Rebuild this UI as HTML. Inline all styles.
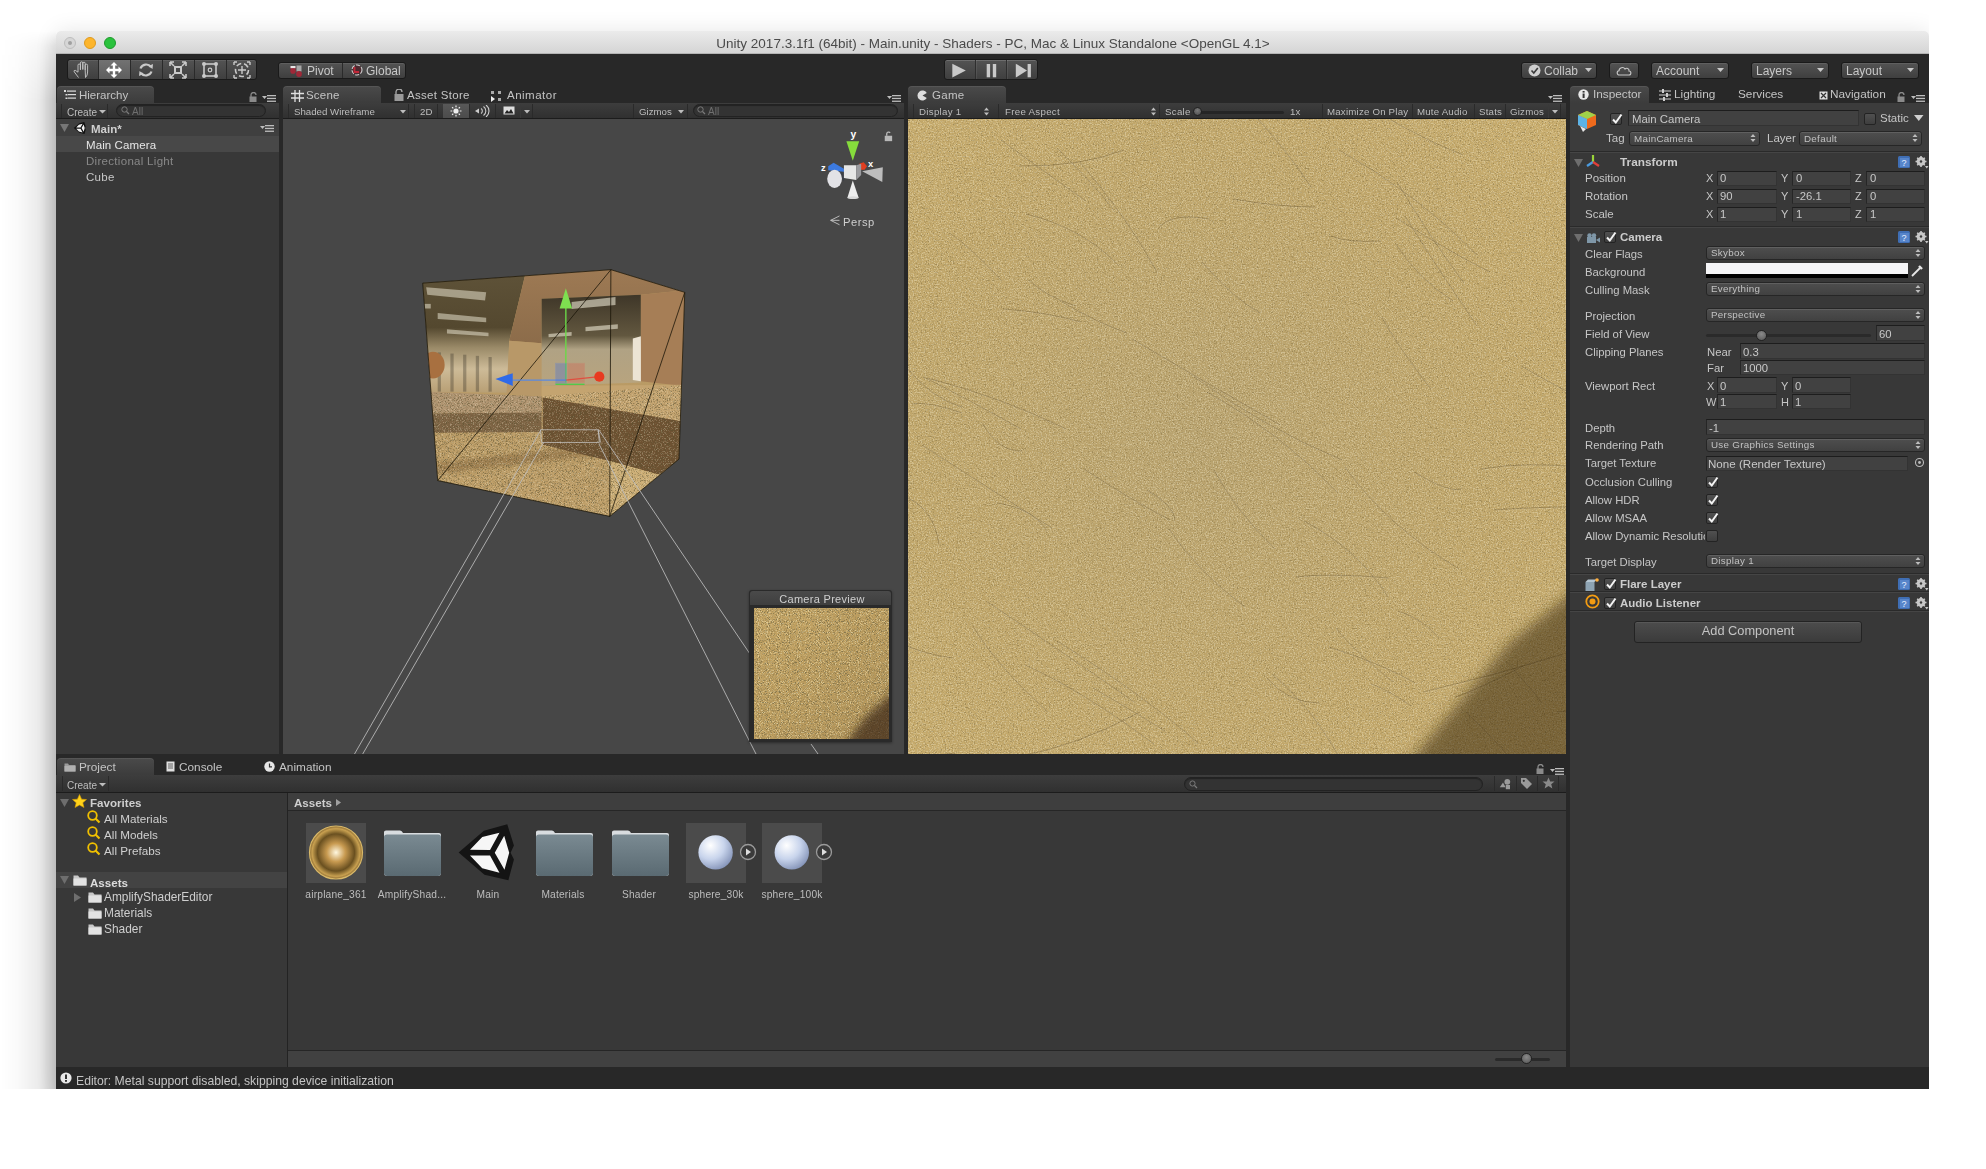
<!DOCTYPE html><html><head><meta charset="utf-8"><style>
html,body{margin:0;padding:0;}
body{width:1986px;height:1169px;position:relative;overflow:hidden;background:#fff;font-family:"Liberation Sans",sans-serif;}
.a{position:absolute;}
.t{position:absolute;white-space:nowrap;line-height:1;font-family:"Liberation Sans",sans-serif;will-change:transform;}
</style></head><body>
<div class="a" style="left:56px;top:31px;width:1873px;height:1058px;border-radius:5px 5px 0 0;box-shadow:0 0 22px rgba(0,0,0,0.10);"></div>
<div class="a" style="left:1929px;top:0px;width:57px;height:1169px;background:#fff;"></div>
<div class="a" style="left:0px;top:1089px;width:1986px;height:80px;background:#fff;"></div>
<div class="a" style="left:0px;top:31px;width:56px;height:1058px;background:linear-gradient(to right,rgba(0,0,0,0) 0%,rgba(0,0,0,0.02) 30%,rgba(0,0,0,0.08) 70%,rgba(0,0,0,0.22) 100%);-webkit-mask-image:linear-gradient(to bottom,transparent 0px,rgba(0,0,0,.4) 15px,#000 70px);"></div>
<div class="a" style="left:56px;top:54px;width:1873px;height:1035px;background:#282828;"></div>
<div class="a" style="left:56px;top:31px;width:1873px;height:23px;background:linear-gradient(#ebebeb,#d4d4d4);border-radius:5px 5px 0 0;"></div>
<div class="a" style="left:56px;top:53px;width:1873px;height:1px;background:#b4b4b4;"></div>
<div class="a" style="left:64px;top:37px;width:10px;height:10px;border-radius:50%;background:#d6d6d6;border:1px solid #bdbdbd;"></div>
<div class="a" style="left:68px;top:41px;width:4px;height:4px;border-radius:50%;background:#a0a0a0;"></div>
<div class="a" style="left:84px;top:37px;width:10px;height:10px;border-radius:50%;background:#fdb52c;border:1px solid #de9a1f;"></div>
<div class="a" style="left:104px;top:37px;width:10px;height:10px;border-radius:50%;background:#2ac23d;border:1px solid #1f9a2c;"></div>
<div class="t" style="left:693px;width:600px;text-align:center;top:37.07px;font-size:13.5px;color:#4a4a4a;">Unity 2017.3.1f1 (64bit) - Main.unity - Shaders - PC, Mac &amp; Linux Standalone &lt;OpenGL 4.1&gt;</div>
<div class="a" style="left:67px;top:59px;width:190px;height:21px;background:linear-gradient(#535353,#3f3f3f);border:1px solid #1a1a1a;border-radius:3px;box-sizing:border-box;box-shadow:inset 0 1px 0 rgba(255,255,255,0.08);"></div>
<div class="a" style="left:98px;top:60px;width:32px;height:19px;background:linear-gradient(#727272,#5e5e5e);"></div>
<div class="a" style="left:98px;top:60px;width:1px;height:19px;background:#2a2a2a;"></div>
<div class="a" style="left:130px;top:60px;width:1px;height:19px;background:#2a2a2a;"></div>
<div class="a" style="left:162px;top:60px;width:1px;height:19px;background:#2a2a2a;"></div>
<div class="a" style="left:194px;top:60px;width:1px;height:19px;background:#2a2a2a;"></div>
<div class="a" style="left:226px;top:60px;width:1px;height:19px;background:#2a2a2a;"></div>
<svg class="a" style="left:73px;top:61px;" width="19" height="18" viewBox="0 0 19 18"><path d="M5.5 16.5 L1.2 10.8 Q0.6 9.3 2.2 9.3 L5 11.2 L5 4.2 Q5 3 6.2 3 Q7.4 3 7.4 4.2 L7.4 9 M7.4 8.5 L7.4 2 Q7.4 0.8 8.6 0.8 Q9.8 0.8 9.8 2 L9.8 8.5 M9.8 8.5 L9.8 2.4 Q9.8 1.2 11 1.2 Q12.2 1.2 12.2 2.4 L12.2 9 M12.2 9 L12.2 4.4 Q12.2 3.2 13.4 3.2 Q14.6 3.2 14.6 4.4 L14.6 11 Q14.6 14.5 12.5 16.5 Z" fill="none" stroke="#c9c9c9" stroke-width="0.9" stroke-linejoin="round"/></svg>
<svg class="a" style="left:105px;top:61px;" width="18" height="18" viewBox="0 0 18 18"><path d="M9 1 L12.5 4.5 L10.2 4.5 L10.2 7.8 L13.5 7.8 L13.5 5.5 L17 9 L13.5 12.5 L13.5 10.2 L10.2 10.2 L10.2 13.5 L12.5 13.5 L9 17 L5.5 13.5 L7.8 13.5 L7.8 10.2 L4.5 10.2 L4.5 12.5 L1 9 L4.5 5.5 L4.5 7.8 L7.8 7.8 L7.8 4.5 L5.5 4.5 Z" fill="#fff"/></svg>
<svg class="a" style="left:137px;top:61px;" width="18" height="18" viewBox="0 0 18 18"><path d="M3.5 7.5 A6 6 0 0 1 14 6" fill="none" stroke="#c9c9c9" stroke-width="2.2"/><path d="M14.5 10.5 A6 6 0 0 1 4 12" fill="none" stroke="#c9c9c9" stroke-width="2.2"/><path d="M11.5 5 L16 3 L15.5 8 Z" fill="#c9c9c9"/><path d="M6.5 13 L2 15 L2.5 10 Z" fill="#c9c9c9"/></svg>
<svg class="a" style="left:169px;top:61px;" width="18" height="18" viewBox="0 0 18 18"><rect x="6" y="6" width="6" height="6" fill="none" stroke="#c9c9c9" stroke-width="2"/><path d="M1 1 L5 1 M1 1 L1 5 M1 1 L5 5 M17 1 L13 1 M17 1 L17 5 M17 1 L13 5 M1 17 L5 17 M1 17 L1 13 M1 17 L5 13 M17 17 L13 17 M17 17 L17 13 M17 17 L13 13" stroke="#c9c9c9" stroke-width="1.6" fill="none"/></svg>
<svg class="a" style="left:201px;top:61px;" width="18" height="18" viewBox="0 0 18 18"><rect x="3" y="3" width="12" height="12" fill="none" stroke="#c9c9c9" stroke-width="1.6"/><circle cx="3" cy="3" r="2" fill="#c9c9c9"/><circle cx="15" cy="3" r="2" fill="#c9c9c9"/><circle cx="3" cy="15" r="2" fill="#c9c9c9"/><circle cx="15" cy="15" r="2" fill="#c9c9c9"/><circle cx="9" cy="9" r="1.8" fill="none" stroke="#c9c9c9" stroke-width="1.2"/></svg>
<svg class="a" style="left:233px;top:61px;" width="18" height="18" viewBox="0 0 18 18"><circle cx="9" cy="9" r="6.5" fill="none" stroke="#c9c9c9" stroke-width="1.6" stroke-dasharray="5 3"/><path d="M9 5 L9 13 M5 9 L13 9" stroke="#c9c9c9" stroke-width="1.4"/><path d="M1 1 L4 1 M1 1 L1 4 M17 1 L14 1 M17 1 L17 4 M1 17 L4 17 M1 17 L1 14 M17 17 L14 17 M17 17 L17 14" stroke="#c9c9c9" stroke-width="1.4"/></svg>
<div class="a" style="left:278px;top:62px;width:128px;height:17px;background:linear-gradient(#535353,#3f3f3f);border:1px solid #1a1a1a;border-radius:3px;box-sizing:border-box;box-shadow:inset 0 1px 0 rgba(255,255,255,0.08);"></div>
<div class="a" style="left:342px;top:63px;width:1px;height:15px;background:#2a2a2a;"></div>
<svg class="a" style="left:290px;top:65px;" width="14" height="13" viewBox="0 0 14 13"><rect x="0.5" y="1.5" width="5" height="5" fill="#8a2030"/><rect x="0.5" y="1" width="5" height="2.2" fill="#e6e6e6"/><rect x="6.5" y="0.5" width="5" height="6" fill="#a8a8a8"/><circle cx="3" cy="6.2" r="2.6" fill="#a02838"/><circle cx="9" cy="9" r="2.9" fill="#a02838"/></svg>
<div class="t" style="left:307px;top:64.64px;font-size:12px;color:#c8c8c8;">Pivot</div>
<svg class="a" style="left:351px;top:64px;" width="12" height="12" viewBox="0 0 12 12"><circle cx="6" cy="6" r="5" fill="#4a2a30" stroke="#d0d0d0" stroke-width="1.1" stroke-dasharray="4 1.5"/><path d="M3.5 3 L3.5 8 L8 8" stroke="#c02838" fill="none" stroke-width="1.8"/></svg>
<div class="t" style="left:366px;top:64.64px;font-size:12px;color:#c8c8c8;">Global</div>
<div class="a" style="left:944px;top:59px;width:94px;height:21px;background:linear-gradient(#535353,#3f3f3f);border:1px solid #1a1a1a;border-radius:3px;box-sizing:border-box;box-shadow:inset 0 1px 0 rgba(255,255,255,0.08);box-shadow:inset 0 1px 0 rgba(255,255,255,0.16);"></div>
<div class="a" style="left:975px;top:60px;width:1px;height:19px;background:#2e2e2e;box-shadow:1px 0 0 rgba(255,255,255,0.07);"></div>
<div class="a" style="left:1006px;top:60px;width:1px;height:19px;background:#2e2e2e;box-shadow:1px 0 0 rgba(255,255,255,0.07);"></div>
<svg class="a" style="left:950px;top:61px;" width="20" height="18" viewBox="0 0 20 18"><path d="M2.3 2.7 L15.8 9.6 L2.3 16.5 Z" fill="#c9c9c9"/></svg>
<svg class="a" style="left:982px;top:61px;" width="18" height="18" viewBox="0 0 18 18"><rect x="4.7" y="3" width="3.4" height="13.3" fill="#c9c9c9"/><rect x="10.8" y="3" width="3.4" height="13.3" fill="#c9c9c9"/></svg>
<svg class="a" style="left:1013px;top:61px;" width="20" height="18" viewBox="0 0 20 18"><path d="M2.8 2.7 L14 9.6 L2.8 16.5 Z" fill="#c9c9c9"/><rect x="14.6" y="3" width="3.3" height="13.3" fill="#c9c9c9"/></svg>
<div class="a" style="left:1521px;top:62px;width:76px;height:17px;background:linear-gradient(#535353,#3f3f3f);border:1px solid #1a1a1a;border-radius:3px;box-sizing:border-box;box-shadow:inset 0 1px 0 rgba(255,255,255,0.08);"></div>
<div class="t" style="left:1544px;top:65.34px;font-size:12px;color:#c8c8c8;">Collab</div>
<svg class="a" style="left:1585px;top:68px;" width="7" height="5" viewBox="0 0 7 5"><path d="M0 0 L7 0 L3.5 4 Z" fill="#c8c8c8"/></svg>
<svg class="a" style="left:1528px;top:64px;" width="13" height="13" viewBox="0 0 13 13"><circle cx="6.5" cy="6.5" r="6" fill="#cfcfcf"/><path d="M3.5 6.5 L5.8 9 L9.8 4" stroke="#3a3a3a" stroke-width="1.6" fill="none"/></svg>
<div class="a" style="left:1609px;top:62px;width:30px;height:17px;background:linear-gradient(#535353,#3f3f3f);border:1px solid #1a1a1a;border-radius:3px;box-sizing:border-box;box-shadow:inset 0 1px 0 rgba(255,255,255,0.08);"></div>
<svg class="a" style="left:1615px;top:64px;" width="18" height="13" viewBox="0 0 18 13"><path d="M4.5 11 C1.5 11 1.5 7 4 6.8 C4 3.5 8.5 2.5 10 5 C11.5 3.5 14.5 4.5 14 7 C16.5 7 16.5 11 14 11 Z" fill="none" stroke="#c8c8c8" stroke-width="1.1"/></svg>
<div class="a" style="left:1651px;top:62px;width:78px;height:17px;background:linear-gradient(#535353,#3f3f3f);border:1px solid #1a1a1a;border-radius:3px;box-sizing:border-box;box-shadow:inset 0 1px 0 rgba(255,255,255,0.08);"></div>
<div class="t" style="left:1656px;top:65.34px;font-size:12px;color:#c8c8c8;">Account</div>
<svg class="a" style="left:1717px;top:68px;" width="7" height="5" viewBox="0 0 7 5"><path d="M0 0 L7 0 L3.5 4 Z" fill="#c8c8c8"/></svg>
<div class="a" style="left:1751px;top:62px;width:78px;height:17px;background:linear-gradient(#535353,#3f3f3f);border:1px solid #1a1a1a;border-radius:3px;box-sizing:border-box;box-shadow:inset 0 1px 0 rgba(255,255,255,0.08);"></div>
<div class="t" style="left:1756px;top:65.34px;font-size:12px;color:#c8c8c8;">Layers</div>
<svg class="a" style="left:1817px;top:68px;" width="7" height="5" viewBox="0 0 7 5"><path d="M0 0 L7 0 L3.5 4 Z" fill="#c8c8c8"/></svg>
<div class="a" style="left:1841px;top:62px;width:78px;height:17px;background:linear-gradient(#535353,#3f3f3f);border:1px solid #1a1a1a;border-radius:3px;box-sizing:border-box;box-shadow:inset 0 1px 0 rgba(255,255,255,0.08);"></div>
<div class="t" style="left:1846px;top:65.34px;font-size:12px;color:#c8c8c8;">Layout</div>
<svg class="a" style="left:1907px;top:68px;" width="7" height="5" viewBox="0 0 7 5"><path d="M0 0 L7 0 L3.5 4 Z" fill="#c8c8c8"/></svg>
<div class="a" style="left:56px;top:103px;width:223px;height:651px;background:#383838;"></div>
<div class="a" style="left:57px;top:86px;width:97px;height:17px;background:linear-gradient(#4a4a4a,#3c3c3c);border-radius:4px 4px 0 0;box-shadow:inset 0 1px 0 rgba(255,255,255,0.07);"></div>
<svg class="a" style="left:64px;top:90px;" width="12" height="10" viewBox="0 0 12 10"><rect x="0" y="0" width="2" height="2" fill="#ddd"/><rect x="3" y="0.5" width="9" height="1.2" fill="#ddd"/><rect x="1.5" y="4" width="2" height="1.5" fill="#ddd"/><rect x="4" y="4" width="8" height="1.2" fill="#ddd"/><rect x="1.5" y="7.5" width="2" height="1.5" fill="#ddd"/><rect x="4" y="7.5" width="8" height="1.2" fill="#ddd"/></svg>
<div class="t" style="left:79px;top:90.07px;font-size:11.5px;color:#c4c4c4;">Hierarchy</div>
<svg class="a" style="left:249px;top:92px;" width="9" height="10" viewBox="0 0 9 10"><path d="M2 5 L2 3 A2.5 2.5 0 0 1 7 3" fill="none" stroke="#8a8a8a" stroke-width="1.3"/><rect x="0.5" y="4.5" width="7" height="5.5" fill="#8a8a8a"/></svg>
<svg class="a" style="left:262px;top:95px;" width="15" height="7" viewBox="0 0 15 7"><path d="M0 1 L5 1 L2.5 4 Z" fill="#bdbdbd"/><rect x="5" y="0" width="9" height="1.3" fill="#bdbdbd"/><rect x="5" y="2.8" width="9" height="1.3" fill="#bdbdbd"/><rect x="5" y="5.6" width="9" height="1.3" fill="#bdbdbd"/></svg>
<div class="a" style="left:56px;top:103px;width:223px;height:16px;background:linear-gradient(#3d3d3d,#303030);border-bottom:1px solid #1c1c1c;box-sizing:border-box;"></div>
<div class="a" style="left:61px;top:104px;width:1px;height:14px;background:#2a2a2a;"></div>
<div class="a" style="left:107px;top:104px;width:1px;height:14px;background:#2a2a2a;"></div>
<div class="t" style="left:67px;top:107.53px;font-size:10px;color:#bdbdbd;">Create</div>
<svg class="a" style="left:99px;top:110px;" width="7" height="4" viewBox="0 0 7 4"><path d="M0 0 L7 0 L3.5 3.5 Z" fill="#bdbdbd"/></svg>
<div class="a" style="left:116px;top:104px;width:150px;height:13px;background:#333;border:1px solid #222;border-radius:7px;box-sizing:border-box;box-shadow:inset 0 1px 1px rgba(0,0,0,0.35);"></div>
<svg class="a" style="left:121px;top:106px;" width="10" height="9" viewBox="0 0 10 9"><circle cx="3.5" cy="3.5" r="2.7" fill="none" stroke="#7a7a7a" stroke-width="1"/><path d="M5.5 5.5 L8 8" stroke="#7a7a7a" stroke-width="1.2"/></svg>
<div class="t" style="left:132px;top:107.03px;font-size:10px;color:#6f6f6f;">All</div>
<div class="a" style="left:56px;top:119px;width:223px;height:17px;background:#3f3f3f;"></div>
<div class="a" style="left:56px;top:136px;width:223px;height:16px;background:#484848;"></div>
<svg class="a" style="left:60px;top:124px;" width="9" height="8" viewBox="0 0 9 8"><path d="M0 0 L9 0 L4.5 8 Z" fill="#777"/></svg>
<svg class="a" style="left:73px;top:121px;" width="14" height="14" viewBox="0 0 14 14"><g transform="scale(0.012)"><path d="M65 585 L520 195 L940 75 L1060 460 L1000 590 L1060 710 L960 1085 L530 985 Z" fill="#111"/><path d="M270 535 L490 305 L800 230 L630 540 Z M270 640 L630 640 L800 950 L490 870 Z M715 590 L885 285 L975 590 L890 895 Z" fill="#f2f2f2"/></g></svg>
<div class="t" style="left:90.5px;top:124.27px;font-size:11.5px;color:#d0d0d0;font-weight:bold;">Main*</div>
<svg class="a" style="left:260px;top:125px;" width="15" height="7" viewBox="0 0 15 7"><path d="M0 1 L5 1 L2.5 4 Z" fill="#bdbdbd"/><rect x="5" y="0" width="9" height="1.3" fill="#bdbdbd"/><rect x="5" y="2.8" width="9" height="1.3" fill="#bdbdbd"/><rect x="5" y="5.6" width="9" height="1.3" fill="#bdbdbd"/></svg>
<div class="t" style="left:86px;top:140.27px;font-size:11.5px;color:#e6e6e6;letter-spacing:0.1px;">Main Camera</div>
<div class="t" style="left:86px;top:156.27px;font-size:11.5px;color:#888;letter-spacing:0.3px;">Directional Light</div>
<div class="t" style="left:86px;top:172.27px;font-size:11.5px;color:#c8c8c8;letter-spacing:0.3px;">Cube</div>
<div class="a" style="left:283px;top:119px;width:621px;height:635px;background:#474747;"></div>
<div class="a" style="left:283px;top:86px;width:98px;height:17px;background:linear-gradient(#4a4a4a,#3c3c3c);border-radius:4px 4px 0 0;box-shadow:inset 0 1px 0 rgba(255,255,255,0.07);"></div>
<svg class="a" style="left:291px;top:90px;" width="13" height="12" viewBox="0 0 13 12"><path d="M4 0 L4 12 M8.5 0 L8.5 12 M0 3.5 L13 3.5 M0 8 L13 8" stroke="#e0e0e0" stroke-width="1.3"/></svg>
<div class="t" style="left:306px;top:90.07px;font-size:11.5px;color:#c4c4c4;letter-spacing:0.2px;">Scene</div>
<svg class="a" style="left:393px;top:89px;" width="12" height="12" viewBox="0 0 12 12"><path d="M3 5 L3 3 A3 3 0 0 1 9 3" fill="none" stroke="#aaa" stroke-width="1.3"/><rect x="1.5" y="5" width="9" height="7" fill="#9a9a9a"/></svg>
<div class="t" style="left:406.5px;top:90.07px;font-size:11.5px;color:#c4c4c4;letter-spacing:0.3px;">Asset Store</div>
<svg class="a" style="left:491px;top:91px;" width="11" height="11" viewBox="0 0 11 11"><rect x="0" y="0" width="3" height="3" fill="#aaa"/><rect x="7" y="0" width="3" height="3" fill="#aaa"/><rect x="7" y="7" width="3" height="3" fill="#aaa"/><path d="M0 5 L4 8 L0 11 Z" fill="#eee"/></svg>
<div class="t" style="left:506.5px;top:90.07px;font-size:11.5px;color:#c4c4c4;letter-spacing:0.5px;">Animator</div>
<svg class="a" style="left:887px;top:95px;" width="15" height="7" viewBox="0 0 15 7"><path d="M0 1 L5 1 L2.5 4 Z" fill="#bdbdbd"/><rect x="5" y="0" width="9" height="1.3" fill="#bdbdbd"/><rect x="5" y="2.8" width="9" height="1.3" fill="#bdbdbd"/><rect x="5" y="5.6" width="9" height="1.3" fill="#bdbdbd"/></svg>
<div class="a" style="left:283px;top:103px;width:621px;height:16px;background:linear-gradient(#3d3d3d,#303030);border-bottom:1px solid #1c1c1c;box-sizing:border-box;"></div>
<div class="a" style="left:288px;top:104px;width:1px;height:14px;background:#2a2a2a;"></div>
<div class="t" style="left:294px;top:106.79px;font-size:9.7px;color:#bdbdbd;">Shaded Wireframe</div>
<svg class="a" style="left:400px;top:110px;" width="6" height="4" viewBox="0 0 6 4"><path d="M0 0 L6 0 L3 3.5 Z" fill="#bdbdbd"/></svg>
<div class="a" style="left:408px;top:104px;width:1px;height:14px;background:#2a2a2a;"></div>
<div class="a" style="left:414px;top:104px;width:1px;height:14px;background:#2a2a2a;"></div>
<div class="t" style="left:419.5px;top:106.79px;font-size:9.7px;color:#bdbdbd;">2D</div>
<div class="a" style="left:437px;top:104px;width:1px;height:14px;background:#2a2a2a;"></div>
<div class="a" style="left:443px;top:104px;width:26px;height:14px;background:linear-gradient(#585858,#4c4c4c);"></div>
<svg class="a" style="left:450px;top:105px;" width="12" height="12" viewBox="0 0 12 12"><circle cx="6" cy="6" r="2.6" fill="#eee"/><path d="M6 0.5 L6 2.3 M6 9.7 L6 11.5 M0.5 6 L2.3 6 M9.7 6 L11.5 6 M2.1 2.1 L3.3 3.3 M8.7 8.7 L9.9 9.9 M2.1 9.9 L3.3 8.7 M8.7 3.3 L9.9 2.1" stroke="#eee" stroke-width="1.2"/></svg>
<div class="a" style="left:469px;top:104px;width:1px;height:14px;background:#2a2a2a;"></div>
<svg class="a" style="left:475px;top:105px;" width="15" height="12" viewBox="0 0 15 12"><path d="M0 6 L4 3.5 L4 8.5 Z" fill="#ccc"/><path d="M6 3.5 A3 3 0 0 1 6 8.5 M8.5 1.5 A5.5 5.5 0 0 1 8.5 10.5 M11 0 A7.5 7.5 0 0 1 11 12" fill="none" stroke="#ccc" stroke-width="1.1"/></svg>
<div class="a" style="left:495px;top:104px;width:1px;height:14px;background:#2a2a2a;"></div>
<svg class="a" style="left:503px;top:106px;" width="12" height="9" viewBox="0 0 12 9"><rect x="0.5" y="0.5" width="11" height="8" fill="#ddd"/><path d="M1.5 7.5 L4 4 L6 6 L8 3 L10.5 7.5 Z" fill="#222"/></svg>
<div class="a" style="left:520px;top:104px;width:1px;height:14px;background:#3a3a3a;"></div>
<svg class="a" style="left:524px;top:110px;" width="6" height="4" viewBox="0 0 6 4"><path d="M0 0 L6 0 L3 3.5 Z" fill="#bdbdbd"/></svg>
<div class="a" style="left:532px;top:104px;width:1px;height:14px;background:#2a2a2a;"></div>
<div class="a" style="left:633px;top:104px;width:1px;height:14px;background:#2a2a2a;"></div>
<div class="t" style="left:639px;top:106.79px;font-size:9.7px;color:#bdbdbd;">Gizmos</div>
<svg class="a" style="left:678px;top:110px;" width="6" height="4" viewBox="0 0 6 4"><path d="M0 0 L6 0 L3 3.5 Z" fill="#bdbdbd"/></svg>
<div class="a" style="left:687px;top:104px;width:1px;height:14px;background:#2a2a2a;"></div>
<div class="a" style="left:693px;top:104px;width:205px;height:13px;background:#333;border:1px solid #222;border-radius:7px;box-sizing:border-box;box-shadow:inset 0 1px 1px rgba(0,0,0,0.35);"></div>
<svg class="a" style="left:697px;top:106px;" width="10" height="9" viewBox="0 0 10 9"><circle cx="3.5" cy="3.5" r="2.7" fill="none" stroke="#7a7a7a" stroke-width="1"/><path d="M5.5 5.5 L8 8" stroke="#7a7a7a" stroke-width="1.2"/></svg>
<div class="t" style="left:708px;top:107.03px;font-size:10px;color:#6f6f6f;">All</div>
<div class="a" style="left:908px;top:86px;width:98px;height:17px;background:linear-gradient(#4a4a4a,#3c3c3c);border-radius:4px 4px 0 0;box-shadow:inset 0 1px 0 rgba(255,255,255,0.07);"></div>
<svg class="a" style="left:917px;top:90px;" width="11" height="11" viewBox="0 0 11 11"><path d="M9.8 3 A5 5 0 1 0 9.8 8 L5.5 5.5 Z" fill="#ddd"/></svg>
<div class="t" style="left:932px;top:90.07px;font-size:11.5px;color:#c4c4c4;letter-spacing:0.3px;">Game</div>
<svg class="a" style="left:1548px;top:95px;" width="15" height="7" viewBox="0 0 15 7"><path d="M0 1 L5 1 L2.5 4 Z" fill="#bdbdbd"/><rect x="5" y="0" width="9" height="1.3" fill="#bdbdbd"/><rect x="5" y="2.8" width="9" height="1.3" fill="#bdbdbd"/><rect x="5" y="5.6" width="9" height="1.3" fill="#bdbdbd"/></svg>
<div class="a" style="left:908px;top:103px;width:658px;height:16px;background:linear-gradient(#3d3d3d,#303030);border-bottom:1px solid #1c1c1c;box-sizing:border-box;"></div>
<div class="a" style="left:913px;top:104px;width:1px;height:14px;background:#2a2a2a;"></div>
<div class="t" style="left:919px;top:106.79px;font-size:9.7px;color:#bdbdbd;letter-spacing:0.3px;">Display 1</div>
<svg class="a" style="left:984px;top:107px;" width="5" height="9" viewBox="0 0 5 9"><path d="M0 3.5 L2.5 0.5 L5 3.5 Z M0 5.5 L2.5 8.5 L5 5.5 Z" fill="#bdbdbd"/></svg>
<div class="a" style="left:998px;top:104px;width:1px;height:14px;background:#2a2a2a;"></div>
<div class="t" style="left:1005px;top:106.79px;font-size:9.7px;color:#bdbdbd;letter-spacing:0.3px;">Free Aspect</div>
<svg class="a" style="left:1151px;top:107px;" width="5" height="9" viewBox="0 0 5 9"><path d="M0 3.5 L2.5 0.5 L5 3.5 Z M0 5.5 L2.5 8.5 L5 5.5 Z" fill="#bdbdbd"/></svg>
<div class="a" style="left:1159px;top:104px;width:1px;height:14px;background:#2a2a2a;"></div>
<div class="t" style="left:1165px;top:107.29px;font-size:9.7px;color:#bdbdbd;letter-spacing:0.3px;">Scale</div>
<div class="a" style="left:1194px;top:111px;width:90px;height:3px;background:#252525;border-radius:2px;"></div>
<div class="a" style="left:1193px;top:107px;width:9px;height:9px;background:radial-gradient(circle at 50% 35%,#7a7a7a,#4a4a4a);border-radius:50%;border:1px solid #222;box-sizing:border-box;"></div>
<div class="t" style="left:1290px;top:107.29px;font-size:9.7px;color:#bdbdbd;">1x</div>
<div class="a" style="left:1322px;top:104px;width:1px;height:14px;background:#2a2a2a;"></div>
<div class="t" style="left:1327px;top:106.79px;font-size:9.7px;color:#bdbdbd;letter-spacing:0.2px;">Maximize On Play</div>
<div class="a" style="left:1412px;top:104px;width:1px;height:14px;background:#2a2a2a;"></div>
<div class="t" style="left:1417px;top:106.79px;font-size:9.7px;color:#bdbdbd;letter-spacing:0.2px;">Mute Audio</div>
<div class="a" style="left:1474px;top:104px;width:1px;height:14px;background:#2a2a2a;"></div>
<div class="t" style="left:1479px;top:106.79px;font-size:9.7px;color:#bdbdbd;letter-spacing:0.2px;">Stats</div>
<div class="a" style="left:1505px;top:104px;width:1px;height:14px;background:#2a2a2a;"></div>
<div class="t" style="left:1510px;top:106.79px;font-size:9.7px;color:#bdbdbd;letter-spacing:0.2px;">Gizmos</div>
<div class="a" style="left:1548px;top:104px;width:1px;height:14px;background:#3a3a3a;"></div>
<svg class="a" style="left:1552px;top:110px;" width="6" height="4" viewBox="0 0 6 4"><path d="M0 0 L6 0 L3 3.5 Z" fill="#bdbdbd"/></svg>
<div class="a" style="left:1560px;top:104px;width:1px;height:14px;background:#2a2a2a;"></div>
<div class="a" style="left:1570px;top:103px;width:359px;height:964px;background:#383838;"></div>
<div class="a" style="left:1570px;top:86px;width:79px;height:17px;background:linear-gradient(#4a4a4a,#3c3c3c);border-radius:4px 4px 0 0;box-shadow:inset 0 1px 0 rgba(255,255,255,0.07);"></div>
<div class="a" style="left:56px;top:775px;width:1510px;height:292px;background:#383838;"></div>
<div class="a" style="left:57px;top:758px;width:97px;height:17px;background:linear-gradient(#4a4a4a,#3c3c3c);border-radius:4px 4px 0 0;box-shadow:inset 0 1px 0 rgba(255,255,255,0.07);"></div>
<div class="t" style="left:76px;top:1074.67px;font-size:12.2px;color:#c4c4c4;">Editor: Metal support disabled, skipping device initialization</div>
<svg class="a" style="left:1578px;top:89px;" width="11" height="11" viewBox="0 0 11 11"><circle cx="5.5" cy="5.5" r="5.2" fill="#e8e8e8"/><rect x="4.6" y="4.5" width="2" height="4.5" fill="#333"/><rect x="4.6" y="2" width="2" height="1.6" fill="#333"/></svg>
<div class="t" style="left:1592.7px;top:89.01px;font-size:11.8px;color:#c4c4c4;">Inspector</div>
<svg class="a" style="left:1659px;top:89px;" width="12" height="12" viewBox="0 0 12 12"><path d="M0 2 L12 2 M0 6 L12 6 M0 10 L12 10" stroke="#cfcfcf" stroke-width="1.2"/><rect x="3" y="0" width="2" height="4" fill="#cfcfcf"/><rect x="7" y="4" width="2" height="4" fill="#cfcfcf"/><rect x="4" y="8" width="2" height="4" fill="#cfcfcf"/></svg>
<div class="t" style="left:1674px;top:89.01px;font-size:11.8px;color:#c4c4c4;">Lighting</div>
<div class="t" style="left:1738px;top:89.01px;font-size:11.8px;color:#c4c4c4;">Services</div>
<svg class="a" style="left:1819px;top:91px;" width="9" height="9" viewBox="0 0 9 9"><rect x="0.5" y="0.5" width="8" height="8" fill="#ddd"/><path d="M2 2 L7 7 M7 2 L2 7" stroke="#333" stroke-width="1.2"/></svg>
<div class="t" style="left:1830px;top:89.01px;font-size:11.8px;color:#c4c4c4;">Navigation</div>
<svg class="a" style="left:1897px;top:92px;" width="9" height="10" viewBox="0 0 9 10"><path d="M2 5 L2 3 A2.5 2.5 0 0 1 7 3" fill="none" stroke="#8a8a8a" stroke-width="1.3"/><rect x="0.5" y="4.5" width="7" height="5.5" fill="#8a8a8a"/></svg>
<svg class="a" style="left:1911px;top:95px;" width="15" height="7" viewBox="0 0 15 7"><path d="M0 1 L5 1 L2.5 4 Z" fill="#bdbdbd"/><rect x="5" y="0" width="9" height="1.3" fill="#bdbdbd"/><rect x="5" y="2.8" width="9" height="1.3" fill="#bdbdbd"/><rect x="5" y="5.6" width="9" height="1.3" fill="#bdbdbd"/></svg>
<div class="a" style="left:1570px;top:103px;width:359px;height:48px;background:#3c3c3c;"></div>
<svg class="a" style="left:1577px;top:110px;" width="21" height="22" viewBox="0 0 21 22"><path d="M10 1 L19 5 L19 15 L10 19 L1 15 L1 5 Z" fill="#ee6a1c"/><path d="M10 1 L19 5 L10 9 L1 5 Z" fill="#9fd24a"/><path d="M1 5 L10 9 L10 19 L1 15 Z" fill="#5cb3e6"/><path d="M3 16 L9 19 L6 22 Z" fill="#e8e8e8"/></svg>
<div class="a" style="left:1610px;top:113px;width:12px;height:12px;background:linear-gradient(#505050,#3e3e3e);border:1px solid #232323;border-radius:2px;box-sizing:border-box;"></div>
<svg class="a" style="left:1611px;top:113px;" width="12" height="12" viewBox="0 0 12 12"><path d="M2 6.5 L4.8 9.5 L10.5 1.5" stroke="#f4f4f4" stroke-width="2" fill="none"/></svg>
<div class="a" style="left:1628px;top:110px;width:231px;height:16px;background:#414141;border:1px solid #333;border-top-color:#1d1d1d;border-left-color:#262626;box-sizing:border-box;"></div>
<div class="t" style="left:1632px;top:113.55px;font-size:11.4px;color:#c8c8c8;">Main Camera</div>
<div class="a" style="left:1864px;top:113px;width:12px;height:12px;background:linear-gradient(#505050,#3e3e3e);border:1px solid #232323;border-radius:2px;box-sizing:border-box;"></div>
<div class="t" style="left:1880px;top:113.47px;font-size:11.5px;color:#c6c6c6;">Static</div>
<svg class="a" style="left:1914px;top:115px;" width="10" height="7" viewBox="0 0 10 7"><path d="M0 0 L9.5 0 L4.75 6 Z" fill="#d0d0d0"/></svg>
<div class="t" style="left:1606px;top:133.47px;font-size:11.5px;color:#c6c6c6;">Tag</div>
<div class="a" style="left:1629px;top:131px;width:131px;height:15px;background:linear-gradient(#4e4e4e,#414141);border:1px solid #262626;border-radius:3px;box-sizing:border-box;box-shadow:inset 0 1px 0 rgba(255,255,255,0.10);"></div>
<div class="t" style="left:1634px;top:133.70px;font-size:9.8px;color:#c2c2c2;letter-spacing:0.3px;">MainCamera</div>
<svg class="a" style="left:1750px;top:133px;" width="6" height="10" viewBox="0 0 6 10"><path d="M0.5 4 L3 1 L5.5 4 Z M0.5 6 L3 9 L5.5 6 Z" fill="#bdbdbd"/></svg>
<div class="t" style="left:1767px;top:133.47px;font-size:11.5px;color:#c6c6c6;">Layer</div>
<div class="a" style="left:1799px;top:131px;width:123px;height:15px;background:linear-gradient(#4e4e4e,#414141);border:1px solid #262626;border-radius:3px;box-sizing:border-box;box-shadow:inset 0 1px 0 rgba(255,255,255,0.10);"></div>
<div class="t" style="left:1804px;top:133.70px;font-size:9.8px;color:#c2c2c2;letter-spacing:0.3px;">Default</div>
<svg class="a" style="left:1912px;top:133px;" width="6" height="10" viewBox="0 0 6 10"><path d="M0.5 4 L3 1 L5.5 4 Z M0.5 6 L3 9 L5.5 6 Z" fill="#bdbdbd"/></svg>
<div class="a" style="left:1570px;top:151px;width:359px;height:1px;background:#2a2a2a;"></div>
<div class="a" style="left:1570px;top:152px;width:359px;height:1px;background:#454545;"></div>
<svg class="a" style="left:1574px;top:159px;" width="10" height="8" viewBox="0 0 10 8"><path d="M0 0 L9 0 L4.5 8 Z" fill="#6e6e6e"/></svg>
<svg class="a" style="left:1586px;top:154px;" width="15" height="14" viewBox="0 0 15 14"><path d="M7 8 L7 1" stroke="#9ad43a" stroke-width="2.2"/><path d="M7 8 L1 12" stroke="#4a9be0" stroke-width="2.2"/><path d="M7 8 L13 12" stroke="#e0403a" stroke-width="2.2"/></svg>
<div class="t" style="left:1620px;top:157.21px;font-size:11.8px;color:#cccccc;font-weight:bold;">Transform</div>
<svg class="a" style="left:1897px;top:155px;" width="14" height="14" viewBox="0 0 14 14"><rect x="1" y="1" width="12" height="12" rx="1.5" fill="#3f6eb4"/><rect x="3" y="3" width="9" height="9" fill="#6f9be0" opacity="0.5"/><text x="7" y="11" font-size="9" font-family="Liberation Sans" text-anchor="middle" fill="#e6eeff">?</text></svg>
<svg class="a" style="left:1915px;top:155px;" width="14" height="14" viewBox="0 0 14 14"><circle cx="6" cy="6.5" r="3.2" fill="none" stroke="#c8c8c8" stroke-width="2.4"/><path d="M6 1 L6 12 M0.5 6.5 L11.5 6.5 M2.2 2.7 L9.8 10.3 M2.2 10.3 L9.8 2.7" stroke="#c8c8c8" stroke-width="1.6"/><circle cx="6" cy="6.5" r="1.2" fill="#383838"/><path d="M10 11 L13.5 11 L11.75 13.5 Z" fill="#c8c8c8"/></svg>
<div class="t" style="left:1585px;top:172.97px;font-size:11.5px;color:#c6c6c6;">Position</div>
<div class="t" style="left:1706px;top:173.39px;font-size:11px;color:#c6c6c6;">X</div>
<div class="a" style="left:1717px;top:170.5px;width:60px;height:15.0px;background:#414141;border:1px solid #333;border-top-color:#1d1d1d;border-left-color:#262626;box-sizing:border-box;"></div>
<div class="t" style="left:1720px;top:173.13px;font-size:11.3px;color:#c8c8c8;">0</div>
<div class="t" style="left:1781px;top:173.39px;font-size:11px;color:#c6c6c6;">Y</div>
<div class="a" style="left:1792px;top:170.5px;width:59px;height:15.0px;background:#414141;border:1px solid #333;border-top-color:#1d1d1d;border-left-color:#262626;box-sizing:border-box;"></div>
<div class="t" style="left:1796px;top:173.13px;font-size:11.3px;color:#c8c8c8;">0</div>
<div class="t" style="left:1855px;top:173.39px;font-size:11px;color:#c6c6c6;">Z</div>
<div class="a" style="left:1866px;top:170.5px;width:59px;height:15.0px;background:#414141;border:1px solid #333;border-top-color:#1d1d1d;border-left-color:#262626;box-sizing:border-box;"></div>
<div class="t" style="left:1870px;top:173.13px;font-size:11.3px;color:#c8c8c8;">0</div>
<div class="t" style="left:1585px;top:190.97px;font-size:11.5px;color:#c6c6c6;">Rotation</div>
<div class="t" style="left:1706px;top:191.39px;font-size:11px;color:#c6c6c6;">X</div>
<div class="a" style="left:1717px;top:188.5px;width:60px;height:15.0px;background:#414141;border:1px solid #333;border-top-color:#1d1d1d;border-left-color:#262626;box-sizing:border-box;"></div>
<div class="t" style="left:1720px;top:191.13px;font-size:11.3px;color:#c8c8c8;">90</div>
<div class="t" style="left:1781px;top:191.39px;font-size:11px;color:#c6c6c6;">Y</div>
<div class="a" style="left:1792px;top:188.5px;width:59px;height:15.0px;background:#414141;border:1px solid #333;border-top-color:#1d1d1d;border-left-color:#262626;box-sizing:border-box;"></div>
<div class="t" style="left:1796px;top:191.13px;font-size:11.3px;color:#c8c8c8;">-26.1</div>
<div class="t" style="left:1855px;top:191.39px;font-size:11px;color:#c6c6c6;">Z</div>
<div class="a" style="left:1866px;top:188.5px;width:59px;height:15.0px;background:#414141;border:1px solid #333;border-top-color:#1d1d1d;border-left-color:#262626;box-sizing:border-box;"></div>
<div class="t" style="left:1870px;top:191.13px;font-size:11.3px;color:#c8c8c8;">0</div>
<div class="t" style="left:1585px;top:208.97px;font-size:11.5px;color:#c6c6c6;">Scale</div>
<div class="t" style="left:1706px;top:209.39px;font-size:11px;color:#c6c6c6;">X</div>
<div class="a" style="left:1717px;top:206.5px;width:60px;height:15.0px;background:#414141;border:1px solid #333;border-top-color:#1d1d1d;border-left-color:#262626;box-sizing:border-box;"></div>
<div class="t" style="left:1720px;top:209.13px;font-size:11.3px;color:#c8c8c8;">1</div>
<div class="t" style="left:1781px;top:209.39px;font-size:11px;color:#c6c6c6;">Y</div>
<div class="a" style="left:1792px;top:206.5px;width:59px;height:15.0px;background:#414141;border:1px solid #333;border-top-color:#1d1d1d;border-left-color:#262626;box-sizing:border-box;"></div>
<div class="t" style="left:1796px;top:209.13px;font-size:11.3px;color:#c8c8c8;">1</div>
<div class="t" style="left:1855px;top:209.39px;font-size:11px;color:#c6c6c6;">Z</div>
<div class="a" style="left:1866px;top:206.5px;width:59px;height:15.0px;background:#414141;border:1px solid #333;border-top-color:#1d1d1d;border-left-color:#262626;box-sizing:border-box;"></div>
<div class="t" style="left:1870px;top:209.13px;font-size:11.3px;color:#c8c8c8;">1</div>
<div class="a" style="left:1570px;top:226px;width:359px;height:1px;background:#2a2a2a;"></div>
<div class="a" style="left:1570px;top:227px;width:359px;height:1px;background:#454545;"></div>
<svg class="a" style="left:1574px;top:234px;" width="10" height="8" viewBox="0 0 10 8"><path d="M0 0 L9 0 L4.5 8 Z" fill="#6e6e6e"/></svg>
<svg class="a" style="left:1586px;top:233px;" width="15" height="11" viewBox="0 0 15 11"><rect x="1" y="4" width="9" height="6" fill="#7f97a8"/><circle cx="3.5" cy="2.5" r="2.2" fill="#7f97a8"/><circle cx="8" cy="2.5" r="2.2" fill="#7f97a8"/><path d="M10 7 L14 4.5 L14 9.5 Z" fill="#7f97a8"/></svg>
<div class="a" style="left:1604px;top:231px;width:12px;height:12px;background:linear-gradient(#505050,#3e3e3e);border:1px solid #232323;border-radius:2px;box-sizing:border-box;"></div>
<svg class="a" style="left:1605px;top:231px;" width="12" height="12" viewBox="0 0 12 12"><path d="M2 6.5 L4.8 9.5 L10.5 1.5" stroke="#f4f4f4" stroke-width="2" fill="none"/></svg>
<div class="t" style="left:1619.5px;top:231.97px;font-size:11.5px;color:#cccccc;font-weight:bold;">Camera</div>
<svg class="a" style="left:1897px;top:230px;" width="14" height="14" viewBox="0 0 14 14"><rect x="1" y="1" width="12" height="12" rx="1.5" fill="#3f6eb4"/><rect x="3" y="3" width="9" height="9" fill="#6f9be0" opacity="0.5"/><text x="7" y="11" font-size="9" font-family="Liberation Sans" text-anchor="middle" fill="#e6eeff">?</text></svg>
<svg class="a" style="left:1915px;top:230px;" width="14" height="14" viewBox="0 0 14 14"><circle cx="6" cy="6.5" r="3.2" fill="none" stroke="#c8c8c8" stroke-width="2.4"/><path d="M6 1 L6 12 M0.5 6.5 L11.5 6.5 M2.2 2.7 L9.8 10.3 M2.2 10.3 L9.8 2.7" stroke="#c8c8c8" stroke-width="1.6"/><circle cx="6" cy="6.5" r="1.2" fill="#383838"/><path d="M10 11 L13.5 11 L11.75 13.5 Z" fill="#c8c8c8"/></svg>
<div class="t" style="left:1585px;top:248.63px;font-size:11.3px;color:#c6c6c6;">Clear Flags</div>
<div class="a" style="left:1706px;top:246px;width:219px;height:14px;background:linear-gradient(#4e4e4e,#414141);border:1px solid #262626;border-radius:3px;box-sizing:border-box;box-shadow:inset 0 1px 0 rgba(255,255,255,0.10);"></div>
<div class="t" style="left:1711px;top:247.70px;font-size:9.8px;color:#c2c2c2;letter-spacing:0.3px;">Skybox</div>
<svg class="a" style="left:1915px;top:248px;" width="6" height="10" viewBox="0 0 6 10"><path d="M0.5 4 L3 1 L5.5 4 Z M0.5 6 L3 9 L5.5 6 Z" fill="#bdbdbd"/></svg>
<div class="t" style="left:1585px;top:266.63px;font-size:11.3px;color:#c6c6c6;">Background</div>
<div class="a" style="left:1706px;top:263px;width:202px;height:15px;background:#000;"></div>
<div class="a" style="left:1706px;top:263px;width:202px;height:11px;background:#f5f5f7;"></div>
<svg class="a" style="left:1910px;top:264px;" width="14" height="14" viewBox="0 0 14 14"><path d="M2 12 L10 4" stroke="#e8e8e8" stroke-width="1.8"/><path d="M9 2 L12 5" stroke="#e8e8e8" stroke-width="2.4"/></svg>
<div class="t" style="left:1585px;top:284.63px;font-size:11.3px;color:#c6c6c6;">Culling Mask</div>
<div class="a" style="left:1706px;top:282px;width:219px;height:14px;background:linear-gradient(#4e4e4e,#414141);border:1px solid #262626;border-radius:3px;box-sizing:border-box;box-shadow:inset 0 1px 0 rgba(255,255,255,0.10);"></div>
<div class="t" style="left:1711px;top:283.70px;font-size:9.8px;color:#c2c2c2;letter-spacing:0.3px;">Everything</div>
<svg class="a" style="left:1915px;top:284px;" width="6" height="10" viewBox="0 0 6 10"><path d="M0.5 4 L3 1 L5.5 4 Z M0.5 6 L3 9 L5.5 6 Z" fill="#bdbdbd"/></svg>
<div class="t" style="left:1585px;top:310.63px;font-size:11.3px;color:#c6c6c6;">Projection</div>
<div class="a" style="left:1706px;top:308px;width:219px;height:14px;background:linear-gradient(#4e4e4e,#414141);border:1px solid #262626;border-radius:3px;box-sizing:border-box;box-shadow:inset 0 1px 0 rgba(255,255,255,0.10);"></div>
<div class="t" style="left:1711px;top:309.70px;font-size:9.8px;color:#c2c2c2;letter-spacing:0.3px;">Perspective</div>
<svg class="a" style="left:1915px;top:310px;" width="6" height="10" viewBox="0 0 6 10"><path d="M0.5 4 L3 1 L5.5 4 Z M0.5 6 L3 9 L5.5 6 Z" fill="#bdbdbd"/></svg>
<div class="t" style="left:1585px;top:328.63px;font-size:11.3px;color:#c6c6c6;">Field of View</div>
<div class="a" style="left:1706px;top:334px;width:165px;height:3px;background:#2a2a2a;border-radius:2px;"></div>
<div class="a" style="left:1756px;top:330px;width:11px;height:11px;background:radial-gradient(circle at 50% 35%,#8a8a8a,#555);border-radius:50%;border:1px solid #222;box-sizing:border-box;"></div>
<div class="a" style="left:1876px;top:325px;width:49px;height:16px;background:#414141;border:1px solid #333;border-top-color:#1d1d1d;border-left-color:#262626;box-sizing:border-box;"></div>
<div class="t" style="left:1879px;top:328.63px;font-size:11.3px;color:#c8c8c8;">60</div>
<div class="t" style="left:1585px;top:346.63px;font-size:11.3px;color:#c6c6c6;">Clipping Planes</div>
<div class="t" style="left:1707px;top:346.63px;font-size:11.3px;color:#c6c6c6;">Near</div>
<div class="a" style="left:1740px;top:343px;width:185px;height:16px;background:#414141;border:1px solid #333;border-top-color:#1d1d1d;border-left-color:#262626;box-sizing:border-box;"></div>
<div class="t" style="left:1743px;top:346.63px;font-size:11.3px;color:#c8c8c8;">0.3</div>
<div class="t" style="left:1707px;top:362.63px;font-size:11.3px;color:#c6c6c6;">Far</div>
<div class="a" style="left:1740px;top:360px;width:185px;height:15px;background:#414141;border:1px solid #333;border-top-color:#1d1d1d;border-left-color:#262626;box-sizing:border-box;"></div>
<div class="t" style="left:1743px;top:362.63px;font-size:11.3px;color:#c8c8c8;">1000</div>
<div class="t" style="left:1585px;top:380.63px;font-size:11.3px;color:#c6c6c6;">Viewport Rect</div>
<div class="t" style="left:1707px;top:380.89px;font-size:11px;color:#c6c6c6;">X</div>
<div class="a" style="left:1717px;top:377px;width:60px;height:16px;background:#414141;border:1px solid #333;border-top-color:#1d1d1d;border-left-color:#262626;box-sizing:border-box;"></div>
<div class="t" style="left:1720px;top:380.63px;font-size:11.3px;color:#c8c8c8;">0</div>
<div class="t" style="left:1781px;top:380.89px;font-size:11px;color:#c6c6c6;">Y</div>
<div class="a" style="left:1792px;top:377px;width:59px;height:16px;background:#414141;border:1px solid #333;border-top-color:#1d1d1d;border-left-color:#262626;box-sizing:border-box;"></div>
<div class="t" style="left:1795px;top:380.63px;font-size:11.3px;color:#c8c8c8;">0</div>
<div class="t" style="left:1706px;top:396.89px;font-size:11px;color:#c6c6c6;">W</div>
<div class="a" style="left:1717px;top:394px;width:60px;height:15px;background:#414141;border:1px solid #333;border-top-color:#1d1d1d;border-left-color:#262626;box-sizing:border-box;"></div>
<div class="t" style="left:1720px;top:396.63px;font-size:11.3px;color:#c8c8c8;">1</div>
<div class="t" style="left:1781px;top:396.89px;font-size:11px;color:#c6c6c6;">H</div>
<div class="a" style="left:1792px;top:394px;width:59px;height:15px;background:#414141;border:1px solid #333;border-top-color:#1d1d1d;border-left-color:#262626;box-sizing:border-box;"></div>
<div class="t" style="left:1795px;top:396.63px;font-size:11.3px;color:#c8c8c8;">1</div>
<div class="t" style="left:1585px;top:422.63px;font-size:11.3px;color:#c6c6c6;">Depth</div>
<div class="a" style="left:1706px;top:419px;width:219px;height:16px;background:#414141;border:1px solid #333;border-top-color:#1d1d1d;border-left-color:#262626;box-sizing:border-box;"></div>
<div class="t" style="left:1709px;top:422.63px;font-size:11.3px;color:#c8c8c8;">-1</div>
<div class="t" style="left:1585px;top:440.13px;font-size:11.3px;color:#c6c6c6;">Rendering Path</div>
<div class="a" style="left:1706px;top:438px;width:219px;height:14px;background:linear-gradient(#4e4e4e,#414141);border:1px solid #262626;border-radius:3px;box-sizing:border-box;box-shadow:inset 0 1px 0 rgba(255,255,255,0.10);"></div>
<div class="t" style="left:1711px;top:439.70px;font-size:9.8px;color:#c2c2c2;letter-spacing:0.3px;">Use Graphics Settings</div>
<svg class="a" style="left:1915px;top:440px;" width="6" height="10" viewBox="0 0 6 10"><path d="M0.5 4 L3 1 L5.5 4 Z M0.5 6 L3 9 L5.5 6 Z" fill="#bdbdbd"/></svg>
<div class="t" style="left:1585px;top:458.13px;font-size:11.3px;color:#c6c6c6;">Target Texture</div>
<div class="a" style="left:1706px;top:456px;width:202px;height:15px;background:#414141;border:1px solid #333;border-top-color:#1d1d1d;border-left-color:#262626;box-sizing:border-box;"></div>
<div class="t" style="left:1708px;top:457.88px;font-size:11.6px;color:#c8c8c8;">None (Render Texture)</div>
<svg class="a" style="left:1914px;top:457px;" width="11" height="11" viewBox="0 0 11 11"><circle cx="5.5" cy="5.5" r="4" fill="none" stroke="#bbb" stroke-width="1.1"/><circle cx="5.5" cy="5.5" r="1.4" fill="#bbb"/></svg>
<div class="t" style="left:1585px;top:476.63px;font-size:11.3px;color:#c6c6c6;">Occlusion Culling</div>
<div class="a" style="left:1706px;top:476px;width:12px;height:12px;background:linear-gradient(#505050,#3e3e3e);border:1px solid #232323;border-radius:2px;box-sizing:border-box;"></div>
<svg class="a" style="left:1707px;top:476px;" width="12" height="12" viewBox="0 0 12 12"><path d="M2 6.5 L4.8 9.5 L10.5 1.5" stroke="#f4f4f4" stroke-width="2" fill="none"/></svg>
<div class="t" style="left:1585px;top:494.63px;font-size:11.3px;color:#c6c6c6;">Allow HDR</div>
<div class="a" style="left:1706px;top:494px;width:12px;height:12px;background:linear-gradient(#505050,#3e3e3e);border:1px solid #232323;border-radius:2px;box-sizing:border-box;"></div>
<svg class="a" style="left:1707px;top:494px;" width="12" height="12" viewBox="0 0 12 12"><path d="M2 6.5 L4.8 9.5 L10.5 1.5" stroke="#f4f4f4" stroke-width="2" fill="none"/></svg>
<div class="t" style="left:1585px;top:512.63px;font-size:11.3px;color:#c6c6c6;">Allow MSAA</div>
<div class="a" style="left:1706px;top:512px;width:12px;height:12px;background:linear-gradient(#505050,#3e3e3e);border:1px solid #232323;border-radius:2px;box-sizing:border-box;"></div>
<svg class="a" style="left:1707px;top:512px;" width="12" height="12" viewBox="0 0 12 12"><path d="M2 6.5 L4.8 9.5 L10.5 1.5" stroke="#f4f4f4" stroke-width="2" fill="none"/></svg>
<div class="a" style="left:1585px;top:528px;width:120px;height:16px;overflow:hidden;">
<div class="t" style="left:0px;top:2.63px;font-size:11.3px;color:#c6c6c6;">Allow Dynamic Resolution</div>
</div>
<div class="a" style="left:1706px;top:530px;width:12px;height:12px;background:linear-gradient(#505050,#3e3e3e);border:1px solid #232323;border-radius:2px;box-sizing:border-box;"></div>
<div class="t" style="left:1585px;top:556.63px;font-size:11.3px;color:#c6c6c6;">Target Display</div>
<div class="a" style="left:1706px;top:554px;width:219px;height:14px;background:linear-gradient(#4e4e4e,#414141);border:1px solid #262626;border-radius:3px;box-sizing:border-box;box-shadow:inset 0 1px 0 rgba(255,255,255,0.10);"></div>
<div class="t" style="left:1711px;top:555.70px;font-size:9.8px;color:#c2c2c2;letter-spacing:0.3px;">Display 1</div>
<svg class="a" style="left:1915px;top:556px;" width="6" height="10" viewBox="0 0 6 10"><path d="M0.5 4 L3 1 L5.5 4 Z M0.5 6 L3 9 L5.5 6 Z" fill="#bdbdbd"/></svg>
<div class="a" style="left:1570px;top:573px;width:359px;height:1px;background:#2a2a2a;"></div>
<div class="a" style="left:1570px;top:574px;width:359px;height:1px;background:#454545;"></div>
<svg class="a" style="left:1585px;top:578px;" width="14" height="13" viewBox="0 0 14 13"><rect x="0.5" y="4" width="9" height="9" fill="#8ea4b4"/><path d="M0.5 4 L3 1.5 L11.5 1.5 L9.5 4 Z" fill="#b5c6d2"/><circle cx="12" cy="2" r="1.8" fill="#ffb040"/></svg>
<div class="a" style="left:1604px;top:578px;width:12px;height:12px;background:linear-gradient(#505050,#3e3e3e);border:1px solid #232323;border-radius:2px;box-sizing:border-box;"></div>
<svg class="a" style="left:1605px;top:578px;" width="12" height="12" viewBox="0 0 12 12"><path d="M2 6.5 L4.8 9.5 L10.5 1.5" stroke="#f4f4f4" stroke-width="2" fill="none"/></svg>
<div class="t" style="left:1619.5px;top:579.47px;font-size:11.5px;color:#cccccc;font-weight:bold;">Flare Layer</div>
<svg class="a" style="left:1897px;top:577px;" width="14" height="14" viewBox="0 0 14 14"><rect x="1" y="1" width="12" height="12" rx="1.5" fill="#3f6eb4"/><rect x="3" y="3" width="9" height="9" fill="#6f9be0" opacity="0.5"/><text x="7" y="11" font-size="9" font-family="Liberation Sans" text-anchor="middle" fill="#e6eeff">?</text></svg>
<svg class="a" style="left:1915px;top:577px;" width="14" height="14" viewBox="0 0 14 14"><circle cx="6" cy="6.5" r="3.2" fill="none" stroke="#c8c8c8" stroke-width="2.4"/><path d="M6 1 L6 12 M0.5 6.5 L11.5 6.5 M2.2 2.7 L9.8 10.3 M2.2 10.3 L9.8 2.7" stroke="#c8c8c8" stroke-width="1.6"/><circle cx="6" cy="6.5" r="1.2" fill="#383838"/><path d="M10 11 L13.5 11 L11.75 13.5 Z" fill="#c8c8c8"/></svg>
<div class="a" style="left:1570px;top:591px;width:359px;height:1px;background:#2a2a2a;"></div>
<div class="a" style="left:1570px;top:592px;width:359px;height:1px;background:#454545;"></div>
<svg class="a" style="left:1585px;top:594px;" width="15" height="15" viewBox="0 0 15 15"><circle cx="7.5" cy="7.5" r="6.2" fill="none" stroke="#f39c12" stroke-width="1.8"/><circle cx="7.5" cy="7.5" r="3" fill="#f39c12"/></svg>
<div class="a" style="left:1604px;top:597px;width:12px;height:12px;background:linear-gradient(#505050,#3e3e3e);border:1px solid #232323;border-radius:2px;box-sizing:border-box;"></div>
<svg class="a" style="left:1605px;top:597px;" width="12" height="12" viewBox="0 0 12 12"><path d="M2 6.5 L4.8 9.5 L10.5 1.5" stroke="#f4f4f4" stroke-width="2" fill="none"/></svg>
<div class="t" style="left:1619.5px;top:597.97px;font-size:11.5px;color:#cccccc;font-weight:bold;">Audio Listener</div>
<svg class="a" style="left:1897px;top:596px;" width="14" height="14" viewBox="0 0 14 14"><rect x="1" y="1" width="12" height="12" rx="1.5" fill="#3f6eb4"/><rect x="3" y="3" width="9" height="9" fill="#6f9be0" opacity="0.5"/><text x="7" y="11" font-size="9" font-family="Liberation Sans" text-anchor="middle" fill="#e6eeff">?</text></svg>
<svg class="a" style="left:1915px;top:596px;" width="14" height="14" viewBox="0 0 14 14"><circle cx="6" cy="6.5" r="3.2" fill="none" stroke="#c8c8c8" stroke-width="2.4"/><path d="M6 1 L6 12 M0.5 6.5 L11.5 6.5 M2.2 2.7 L9.8 10.3 M2.2 10.3 L9.8 2.7" stroke="#c8c8c8" stroke-width="1.6"/><circle cx="6" cy="6.5" r="1.2" fill="#383838"/><path d="M10 11 L13.5 11 L11.75 13.5 Z" fill="#c8c8c8"/></svg>
<div class="a" style="left:1570px;top:610px;width:359px;height:1px;background:#2a2a2a;"></div>
<div class="a" style="left:1570px;top:611px;width:359px;height:1px;background:#454545;"></div>
<div class="a" style="left:1634px;top:621px;width:228px;height:22px;background:linear-gradient(#4c4c4c,#3b3b3b);border:1px solid #232323;border-radius:3px;box-sizing:border-box;box-shadow:inset 0 1px 0 rgba(255,255,255,0.07);"></div>
<div class="t" style="left:1448px;width:600px;text-align:center;top:625.36px;font-size:12.8px;color:#c4c4c4;">Add Component</div>
<svg class="a" style="left:410px;top:260px;" width="290" height="270" viewBox="0 0 1256 1169" preserveAspectRatio="none"><defs><linearGradient id="gl" x1="0" y1="0" x2="0" y2="1"><stop offset="0" stop-color="#5e5238"/><stop offset="0.45" stop-color="#54482f"/><stop offset="0.62" stop-color="#9a8a68"/><stop offset="0.8" stop-color="#cdbb98"/><stop offset="1" stop-color="#b89f74"/></linearGradient><linearGradient id="gm" x1="0" y1="0" x2="0" y2="1"><stop offset="0" stop-color="#3e3628"/><stop offset="0.45" stop-color="#62573f"/><stop offset="0.6" stop-color="#b0a284"/><stop offset="1" stop-color="#b8a47e"/></linearGradient><linearGradient id="gw" x1="0" y1="0" x2="0" y2="1"><stop offset="0" stop-color="#9e7a54"/><stop offset="1" stop-color="#8c6c4a"/></linearGradient><linearGradient id="gs" x1="0" y1="0" x2="0" y2="1"><stop offset="0" stop-color="#b49660"/><stop offset="1" stop-color="#c0a06a"/></linearGradient><filter id="nz" x="0" y="0" width="100%" height="100%"><feTurbulence type="fractalNoise" baseFrequency="0.35" numOctaves="1" seed="3"/><feColorMatrix type="matrix" values="0 0 0 0 0.1  0 0 0 0 0.08  0 0 0 0 0.03  5 0 0 0 -2.5"/></filter><filter id="nzl" x="0" y="0" width="100%" height="100%"><feTurbulence type="fractalNoise" baseFrequency="0.35" numOctaves="1" seed="9"/><feColorMatrix type="matrix" values="0 0 0 0 1  0 0 0 0 0.92  0 0 0 0 0.7  0 -5 0 0 2.4"/></filter><filter id="bl3" x="-20%" y="-20%" width="140%" height="140%"><feGaussianBlur stdDeviation="10"/></filter><clipPath id="hexc"><path d="M55 100 L870 42 L1190 140 L1165 862 L865 1110 L120 955 Z"/></clipPath></defs><g clip-path="url(#hexc)"><rect x="0" y="0" width="1256" height="1169" fill="url(#gs)"/><path d="M40 90 L500 60 L430 350 L420 575 L90 572 Z" fill="url(#gl)"/><g fill="#e6e0cc" opacity="0.55"><path d="M70 118 L330 140 L325 175 L75 150 Z"/><path d="M120 230 L330 250 L330 270 L120 255 Z"/><path d="M160 300 L340 315 L340 330 L160 318 Z"/><path d="M60 190 L90 190 L90 210 L60 210 Z"/></g><g fill="#3a3428" opacity="0.35"><rect x="120" y="400" width="14" height="170"/><rect x="175" y="405" width="14" height="165"/><rect x="230" y="410" width="14" height="160"/><rect x="285" y="415" width="14" height="155"/><rect x="340" y="420" width="14" height="150"/></g><path d="M500 60 L880 30 L1200 130 L1000 150 L570 168 L570 360 L430 350 Z" fill="url(#gw)"/><path d="M430 350 L570 360 L570 590 L418 580 Z" fill="#b89868"/><path d="M570 168 L1000 150 L1000 530 L570 545 Z" fill="url(#gm)"/><g fill="#ece6d2" opacity="0.6"><path d="M700 182 L890 160 L890 195 L700 212 Z"/><path d="M760 290 L900 278 L900 298 L760 308 Z"/><path d="M600 320 L700 312 L700 328 L600 334 Z"/></g><path d="M1000 150 L1200 130 L1185 545 L1000 525 Z" fill="#a67e56"/><path d="M965 340 L1000 330 L1000 525 L965 520 Z" fill="#ece4d4"/><path d="M80 570 L570 590 L570 662 L90 665 Z" fill="#b09470"/><path d="M90 665 L570 660 L570 745 L95 748 Z" fill="#7e6444"/><path d="M110 880 L860 790 L860 840 L115 925 Z" fill="#7a5c34" opacity="0.45" filter="url(#bl3)"/><path d="M570 545 L1190 540 L1190 700 L570 595 Z" fill="#c4a470"/><path d="M575 595 L1190 700 L1190 850 L1080 930 L865 870 L575 800 Z" fill="#6e5232"/><path d="M865 870 L1080 930 L1190 850 L1190 1169 L865 1169 Z" fill="#ccae76"/><ellipse cx="100" cy="455" rx="50" ry="58" fill="#a87040"/><clipPath id="flc"><path d="M80 575 L570 590 L1190 540 L1190 1169 L0 1169 Z"/></clipPath><g clip-path="url(#flc)"><rect x="0" y="0" width="1256" height="1169" fill="#000" filter="url(#nz)" opacity="0.55"/><rect x="0" y="0" width="1256" height="1169" fill="#000" filter="url(#nzl)" opacity="0.3"/></g></g><path d="M55 100 L870 42 L1190 140 L1165 862 L865 1110 L120 955 Z M870 42 L865 1110 M120 955 L870 42 M865 1110 L1190 140" stroke="#1a1408" stroke-width="4" fill="none" opacity="0.85"/><path d="M565 735 L815 735 L820 790 L570 790 Z M815 735 L825 790" stroke="#c8c8c8" stroke-width="4" fill="none" opacity="0.8"/><path d="M675 530 L675 200" stroke="#6ad848" stroke-width="6"/><path d="M648 210 L702 210 L675 122 Z" fill="#7ee050"/><path d="M445 520 L675 520" stroke="#5a8ae0" stroke-width="6"/><path d="M370 515 L445 490 L445 545 Z" fill="#2f6ae8"/><path d="M675 520 L820 505" stroke="#e05040" stroke-width="5"/><circle cx="820" cy="505" r="22" fill="#e83a20"/><rect x="630" y="447" width="48" height="88" fill="#3a6ae0" opacity="0.3" stroke="#4f7ae8" stroke-width="3"/><rect x="682" y="447" width="74" height="84" fill="#e04a40" opacity="0.25" stroke="#e05a50" stroke-width="3"/><path d="M630 538 L756 538" stroke="#40d040" stroke-width="5"/></svg>
<svg class="a" style="left:283px;top:119px;" width="621" height="635" viewBox="283 119 621 635"><g stroke="#bdbdbd" stroke-width="1" fill="none" opacity="0.85"><path d="M540.7 430.2 L354.5 754 M543.6 442.7 L362.7 754 M598.5 429.4 L750 654 M598.9 443.8 L756 754 M811 744 L818 754"/></g></svg>
<svg class="a" style="left:810px;top:120px;" width="90" height="115" viewBox="0 0 915 1169" preserveAspectRatio="none"><path d="M370 215 L500 215 L435 415 Z" fill="#86dc3c"/><path d="M300 530 L385 535 L340 625 Z" fill="#3c4048"/><path d="M185 470 L240 435 L345 495 L345 525 L185 512 Z" fill="#3c7ae0"/><ellipse cx="250" cy="598" rx="75" ry="92" fill="#e2e2e6"/><path d="M500 445 L545 430 L580 470 L555 505 L505 505 Z" fill="#e03e20"/><path d="M530 520 L740 480 L735 630 Z" fill="#bdbdbd"/><path d="M345 460 L470 460 L470 610 L345 590 Z" fill="#e6e6e6"/><path d="M470 460 L520 445 L520 560 L470 610 Z" fill="#9a9a9e"/><path d="M435 615 L380 790 L495 790 Z" fill="#ededed"/><ellipse cx="437" cy="790" rx="58" ry="14" fill="#d8d8d8"/><text x="440" y="180" font-family="Liberation Sans" font-weight="bold" font-size="105" fill="#fff" text-anchor="middle">y</text><text x="615" y="478" font-family="Liberation Sans" font-weight="bold" font-size="95" fill="#fff" text-anchor="middle">x</text><text x="135" y="515" font-family="Liberation Sans" font-weight="bold" font-size="95" fill="#fff" text-anchor="middle">z</text><path d="M780 160 L780 140 A20 20 0 0 1 815 130" fill="none" stroke="#b8b8b8" stroke-width="14"/><rect x="760" y="160" width="75" height="55" fill="#b8b8b8"/><path d="M300 975 L210 1020 L300 1065 M210 1020 L300 1020" stroke="#c8c8c8" stroke-width="9" fill="none"/></svg>
<div class="t" style="left:843px;top:216.52px;font-size:11.2px;color:#cfcfcf;letter-spacing:0.5px;">Persp</div>
<div class="a" style="left:749px;top:590px;width:143px;height:152px;background:#2a2a2a;border-radius:3px 3px 0 0;box-shadow:0 1px 3px rgba(0,0,0,0.4);"></div>
<div class="a" style="left:750px;top:591px;width:141px;height:14px;background:linear-gradient(#4a4a4a,#3f3f3f);border-radius:3px 3px 0 0;"></div>
<div class="t" style="left:521.5px;width:600px;text-align:center;top:593.69px;font-size:11px;color:#cfcfcf;letter-spacing:0.3px;">Camera Preview</div>
<svg class="a" style="left:754px;top:608px;" width="135" height="131" viewBox="0 0 135 131"><defs><filter id="nz2" x="0" y="0" width="100%" height="100%"><feTurbulence type="fractalNoise" baseFrequency="1.1" numOctaves="1" seed="7"/><feColorMatrix type="matrix" values="0 0 0 0 0.22  0 0 0 0 0.17  0 0 0 0 0.07  5 0 0 0 -2.5"/></filter><filter id="nz2b" x="0" y="0" width="100%" height="100%"><feTurbulence type="fractalNoise" baseFrequency="1.1" numOctaves="1" seed="19"/><feColorMatrix type="matrix" values="0 0 0 0 0.98  0 0 0 0 0.88  0 0 0 0 0.55  0 -5 0 0 2.4"/></filter><filter id="bl5" x="-50%" y="-50%" width="200%" height="200%"><feGaussianBlur stdDeviation="4"/></filter><linearGradient id="cp" x1="0" y1="0" x2="1" y2="1"><stop offset="0" stop-color="#c4a464"/><stop offset="0.5" stop-color="#bb9c5e"/><stop offset="1" stop-color="#b09258"/></linearGradient></defs><rect width="135" height="131" fill="url(#cp)"/><rect width="135" height="131" filter="url(#nz2)" opacity="0.9"/><rect width="135" height="131" filter="url(#nz2b)" opacity="0.5"/><path d="M160 70 L135 88 L112 108 L95 131 L90 160 L160 160 Z" fill="#3a2812" opacity="0.7" filter="url(#bl5)"/></svg>
<svg class="a" style="left:908px;top:119px;" width="658" height="635" viewBox="0 0 658 635"><defs><radialGradient id="gg" cx="0.45" cy="0.5" r="0.75"><stop offset="0" stop-color="#b8a26e"/><stop offset="0.6" stop-color="#c0a66a"/><stop offset="1" stop-color="#c8ac6c"/></radialGradient><filter id="nz3" x="0" y="0" width="100%" height="100%"><feTurbulence type="fractalNoise" baseFrequency="0.75" numOctaves="2" seed="11"/><feColorMatrix type="matrix" values="0 0 0 0 0.30  0 0 0 0 0.22  0 0 0 0 0.08  4.5 0 0 0 -2.45"/></filter><filter id="nz4" x="0" y="0" width="100%" height="100%"><feTurbulence type="fractalNoise" baseFrequency="0.75" numOctaves="2" seed="23"/><feColorMatrix type="matrix" values="0 0 0 0 0.96  0 0 0 0 0.9  0 0 0 0 0.68  0 -4.5 0 0 2.35"/></filter><linearGradient id="gsh" x1="1" y1="1" x2="0.62" y2="0.62"><stop offset="0" stop-color="#2a2012" stop-opacity="0.85"/><stop offset="0.75" stop-color="#3a2c18" stop-opacity="0.6"/><stop offset="1" stop-color="#3a2c18" stop-opacity="0.1"/></linearGradient></defs><rect width="658" height="635" fill="url(#gg)"/><rect width="658" height="635" filter="url(#nz3)" opacity="0.75"/><rect width="658" height="635" filter="url(#nz4)" opacity="0.35"/><filter id="bl8" x="-50%" y="-50%" width="200%" height="200%"><feGaussianBlur stdDeviation="7"/></filter><path d="M430 -32 Q498 14 555 36 M15 258 Q50 275 113 310 M437 348 Q480 408 551 450 M474 198 Q486 222 523 270 M586 391 Q657 386 701 389 M364 555 Q407 590 438 651 M121 161 Q138 178 168 187 M224 220 Q302 266 372 306 M78 482 Q156 534 226 583 M463 565 Q477 569 503 587 M108 638 Q167 628 232 593 M294 143 Q326 180 352 194 M250 110 Q262 93 301 100 M421 528 Q479 547 507 564 M678 578 Q726 621 771 677 M431 31 Q511 76 569 136 M325 80 Q370 88 407 88 M65 507 Q87 545 140 593 M-35 628 Q-7 642 47 634 M660 13 Q736 30 795 69 M306 351 Q328 392 367 430 M497 97 Q531 152 569 207 M41 114 Q59 125 94 162 M423 117 Q440 124 473 122 M111 47 Q172 48 216 31 M93 21 Q142 57 178 82 M688 22 Q748 56 823 109 M286 258 Q359 310 434 341 M363 -13 Q463 3 538 -1 M75 305 Q91 333 114 332 M149 522 Q234 575 290 624 M489 63 Q524 121 556 164 M-7 376 Q26 388 31 425 M89 384 Q126 390 139 412 M396 402 Q451 431 480 478 M487 124 Q511 161 545 182 M4 285 Q20 282 54 294 M650 593 Q690 590 709 574 M409 671 Q475 702 554 724 M654 48 Q701 75 761 96 M488 99 Q547 136 582 153 M19 259 Q93 278 158 310 M506 353 Q541 374 553 370 M359 559 Q380 584 411 584 M547 578 Q569 571 615 547 M613 247 Q701 298 766 321 M558 593 Q600 634 617 657 M598 542 Q627 574 634 584 M117 546 Q173 571 246 625 M95 190 Q138 193 173 203 M686 341 Q753 313 840 256 M149 29 Q181 60 206 91 M239 371 Q266 387 267 400 M490 492 Q515 500 531 519 M185 569 Q218 588 257 612 M172 43 Q222 102 249 153 M176 350 Q221 380 262 401 M299 273 Q373 314 430 374 M14 326 Q86 373 144 409 M118 95 Q175 109 211 147 M261 410 Q291 454 337 488 M-46 498 Q-10 532 45 539 M338 -13 Q380 32 403 68 M691 385 Q760 392 816 399 M573 350 Q619 342 679 349 M428 509 Q444 530 485 563 M154 183 Q192 205 219 214 M-2 248 Q24 280 54 288 M388 458 Q420 454 481 459 M515 573 Q586 557 655 535" stroke="#3a2c14" stroke-width="0.8" fill="none" opacity="0.35"/><path d="M430 -32 Q498 14 555 36 M15 258 Q50 275 113 310 M437 348 Q480 408 551 450 M474 198 Q486 222 523 270 M586 391 Q657 386 701 389 M364 555 Q407 590 438 651 M121 161 Q138 178 168 187 M224 220 Q302 266 372 306 M78 482 Q156 534 226 583 M463 565 Q477 569 503 587 M108 638 Q167 628 232 593 M294 143 Q326 180 352 194 M250 110 Q262 93 301 100 M421 528 Q479 547 507 564 M678 578 Q726 621 771 677 M431 31 Q511 76 569 136 M325 80 Q370 88 407 88 M65 507 Q87 545 140 593 M-35 628 Q-7 642 47 634 M660 13 Q736 30 795 69 M306 351 Q328 392 367 430 M497 97 Q531 152 569 207 M41 114 Q59 125 94 162 M423 117 Q440 124 473 122 M111 47 Q172 48 216 31 M93 21 Q142 57 178 82 M688 22 Q748 56 823 109 M286 258 Q359 310 434 341 M363 -13 Q463 3 538 -1 M75 305 Q91 333 114 332 M149 522 Q234 575 290 624 M489 63 Q524 121 556 164 M-7 376 Q26 388 31 425 M89 384 Q126 390 139 412 M396 402 Q451 431 480 478 M487 124 Q511 161 545 182 M4 285 Q20 282 54 294 M650 593 Q690 590 709 574 M409 671 Q475 702 554 724 M654 48 Q701 75 761 96 M488 99 Q547 136 582 153 M19 259 Q93 278 158 310 M506 353 Q541 374 553 370 M359 559 Q380 584 411 584 M547 578 Q569 571 615 547 M613 247 Q701 298 766 321 M558 593 Q600 634 617 657 M598 542 Q627 574 634 584 M117 546 Q173 571 246 625 M95 190 Q138 193 173 203 M686 341 Q753 313 840 256 M149 29 Q181 60 206 91 M239 371 Q266 387 267 400 M490 492 Q515 500 531 519 M185 569 Q218 588 257 612 M172 43 Q222 102 249 153 M176 350 Q221 380 262 401 M299 273 Q373 314 430 374 M14 326 Q86 373 144 409 M118 95 Q175 109 211 147 M261 410 Q291 454 337 488 M-46 498 Q-10 532 45 539 M338 -13 Q380 32 403 68 M691 385 Q760 392 816 399 M573 350 Q619 342 679 349 M428 509 Q444 530 485 563 M154 183 Q192 205 219 214 M-2 248 Q24 280 54 288 M388 458 Q420 454 481 459 M515 573 Q586 557 655 535" stroke="#f4e6c0" stroke-width="0.6" fill="none" opacity="0.25" transform="translate(1 1)"/><path d="M760 385 L658 478 L600 525 L508 635 L440 716 L760 716 Z" fill="#3a2a0e" opacity="0.55" filter="url(#bl8)"/></svg>
<svg class="a" style="left:64px;top:762px;" width="12" height="10" viewBox="0 0 12 10"><path d="M0.5 1.5 L4 1.5 L5 3 L11.5 3 L11.5 9.5 L0.5 9.5 Z" fill="#9a9a9a"/><rect x="0.5" y="4" width="11" height="5.5" fill="#b0b0b0"/></svg>
<div class="t" style="left:79px;top:762.31px;font-size:11.8px;color:#c4c4c4;">Project</div>
<svg class="a" style="left:166px;top:761px;" width="9" height="11" viewBox="0 0 9 11"><rect x="0.5" y="0.5" width="8" height="10" fill="#e0e0e0"/><path d="M2 3 L7 3 M2 5 L7 5 M2 7 L7 7" stroke="#555" stroke-width="0.9"/></svg>
<div class="t" style="left:179px;top:762.31px;font-size:11.8px;color:#c4c4c4;">Console</div>
<svg class="a" style="left:264px;top:761px;" width="11" height="11" viewBox="0 0 11 11"><circle cx="5.5" cy="5.5" r="5.2" fill="#e6e6e6"/><path d="M5.5 2.5 L5.5 5.8 L8 5.8" stroke="#333" stroke-width="1.2" fill="none"/></svg>
<div class="t" style="left:279px;top:762.31px;font-size:11.8px;color:#c4c4c4;">Animation</div>
<svg class="a" style="left:1536px;top:764px;" width="9" height="10" viewBox="0 0 9 10"><path d="M2 5 L2 3 A2.5 2.5 0 0 1 7 3" fill="none" stroke="#8a8a8a" stroke-width="1.3"/><rect x="0.5" y="4.5" width="7" height="5.5" fill="#8a8a8a"/></svg>
<svg class="a" style="left:1550px;top:768px;" width="15" height="7" viewBox="0 0 15 7"><path d="M0 1 L5 1 L2.5 4 Z" fill="#bdbdbd"/><rect x="5" y="0" width="9" height="1.3" fill="#bdbdbd"/><rect x="5" y="2.8" width="9" height="1.3" fill="#bdbdbd"/><rect x="5" y="5.6" width="9" height="1.3" fill="#bdbdbd"/></svg>
<div class="a" style="left:56px;top:775px;width:1510px;height:18px;background:linear-gradient(#3d3d3d,#303030);border-bottom:1px solid #1c1c1c;box-sizing:border-box;"></div>
<div class="a" style="left:62px;top:776px;width:1px;height:15px;background:#2a2a2a;"></div>
<div class="a" style="left:108px;top:776px;width:1px;height:15px;background:#2a2a2a;"></div>
<div class="t" style="left:67px;top:780.53px;font-size:10px;color:#bdbdbd;">Create</div>
<svg class="a" style="left:99px;top:783px;" width="7" height="4" viewBox="0 0 7 4"><path d="M0 0 L7 0 L3.5 3.5 Z" fill="#bdbdbd"/></svg>
<div class="a" style="left:1184px;top:777px;width:299px;height:14px;background:#333;border:1px solid #222;border-radius:7px;box-sizing:border-box;box-shadow:inset 0 1px 1px rgba(0,0,0,0.35);"></div>
<svg class="a" style="left:1189px;top:780px;" width="9" height="9" viewBox="0 0 9 9"><circle cx="3.5" cy="3.5" r="2.6" fill="none" stroke="#7a7a7a" stroke-width="1"/><path d="M5.5 5.5 L8 8" stroke="#7a7a7a" stroke-width="1.2"/></svg>
<div class="a" style="left:1494px;top:776px;width:1px;height:15px;background:#2a2a2a;"></div>
<svg class="a" style="left:1499px;top:778px;" width="13" height="13" viewBox="0 0 13 13"><circle cx="8.3" cy="3.8" r="2.9" fill="#9a9a9a"/><path d="M0.8 9.2 L4 4.5 L6.6 9.2 Z" fill="#9a9a9a"/><rect x="6.8" y="7" width="4.2" height="4.2" fill="#9a9a9a"/></svg>
<div class="a" style="left:1516px;top:776px;width:1px;height:15px;background:#2a2a2a;"></div>
<svg class="a" style="left:1520px;top:777px;" width="13" height="13" viewBox="0 0 13 13"><path d="M1 1 L6 1 L12 7 L7 12 L1 6 Z" fill="#9a9a9a"/><circle cx="3.8" cy="3.8" r="1.1" fill="#333"/></svg>
<div class="a" style="left:1537px;top:776px;width:1px;height:15px;background:#2a2a2a;"></div>
<svg class="a" style="left:1542px;top:777px;" width="13" height="12" viewBox="0 0 13 12"><path d="M6.5 0.5 L8.2 4.5 L12.5 4.6 L9.2 7.3 L10.4 11.5 L6.5 9 L2.6 11.5 L3.8 7.3 L0.5 4.6 L4.8 4.5 Z" fill="#8a8a8a"/></svg>
<div class="a" style="left:1558px;top:776px;width:1px;height:15px;background:#2a2a2a;"></div>
<div class="a" style="left:287px;top:793px;width:1px;height:274px;background:#232323;"></div>
<svg class="a" style="left:60px;top:799px;" width="9" height="8" viewBox="0 0 9 8"><path d="M0 0 L9 0 L4.5 8 Z" fill="#6e6e6e"/></svg>
<svg class="a" style="left:72px;top:794px;" width="15" height="14" viewBox="0 0 15 14"><path d="M7.5 0.5 L9.6 5.2 L14.5 5.5 L10.8 8.8 L12 13.5 L7.5 11 L3 13.5 L4.2 8.8 L0.5 5.5 L5.4 5.2 Z" fill="#ffd21a" stroke="#d8a000" stroke-width="0.6"/></svg>
<div class="t" style="left:90.3px;top:797.18px;font-size:11.6px;color:#cfcfcf;font-weight:bold;">Favorites</div>
<svg class="a" style="left:87px;top:810px;" width="14" height="14" viewBox="0 0 14 14"><circle cx="5.5" cy="5.5" r="4.3" fill="none" stroke="#f0c000" stroke-width="1.8"/><path d="M8.5 8.5 L12.5 12.5" stroke="#f0c000" stroke-width="2.2"/></svg>
<div class="t" style="left:104.4px;top:813.10px;font-size:11.7px;color:#cfcfcf;">All Materials</div>
<svg class="a" style="left:87px;top:826px;" width="14" height="14" viewBox="0 0 14 14"><circle cx="5.5" cy="5.5" r="4.3" fill="none" stroke="#f0c000" stroke-width="1.8"/><path d="M8.5 8.5 L12.5 12.5" stroke="#f0c000" stroke-width="2.2"/></svg>
<div class="t" style="left:104.4px;top:829.10px;font-size:11.7px;color:#cfcfcf;">All Models</div>
<svg class="a" style="left:87px;top:842px;" width="14" height="14" viewBox="0 0 14 14"><circle cx="5.5" cy="5.5" r="4.3" fill="none" stroke="#f0c000" stroke-width="1.8"/><path d="M8.5 8.5 L12.5 12.5" stroke="#f0c000" stroke-width="2.2"/></svg>
<div class="t" style="left:104.4px;top:845.10px;font-size:11.7px;color:#cfcfcf;">All Prefabs</div>
<div class="a" style="left:56px;top:872px;width:231px;height:16px;background:#434343;"></div>
<svg class="a" style="left:60px;top:876px;" width="9" height="8" viewBox="0 0 9 8"><path d="M0 0 L9 0 L4.5 8 Z" fill="#6e6e6e"/></svg>
<svg class="a" style="left:73px;top:874px;" width="14" height="12" viewBox="0 0 14 12"><path d="M0.5 1.5 L5 1.5 L6.5 3.5 L13.5 3.5 L13.5 11.5 L0.5 11.5 Z" fill="#c8c8c8"/><rect x="0.5" y="4.5" width="13" height="7" fill="#e2e2e2"/></svg>
<div class="t" style="left:89.5px;top:876.68px;font-size:11.6px;color:#dcdcdc;font-weight:bold;">Assets</div>
<svg class="a" style="left:74px;top:893px;" width="7" height="9" viewBox="0 0 7 9"><path d="M0 0 L7 4.5 L0 9 Z" fill="#6e6e6e"/></svg>
<svg class="a" style="left:88px;top:890.5px;" width="14" height="12" viewBox="0 0 14 12"><path d="M0.5 1.5 L5 1.5 L6.5 3.5 L13.5 3.5 L13.5 11.5 L0.5 11.5 Z" fill="#c8c8c8"/><rect x="0.5" y="4.5" width="13" height="7" fill="#e2e2e2"/></svg>
<div class="t" style="left:104.4px;top:892.43px;font-size:11.9px;color:#cfcfcf;">AmplifyShaderEditor</div>
<svg class="a" style="left:88px;top:906.5px;" width="14" height="12" viewBox="0 0 14 12"><path d="M0.5 1.5 L5 1.5 L6.5 3.5 L13.5 3.5 L13.5 11.5 L0.5 11.5 Z" fill="#c8c8c8"/><rect x="0.5" y="4.5" width="13" height="7" fill="#e2e2e2"/></svg>
<div class="t" style="left:104.4px;top:908.43px;font-size:11.9px;color:#cfcfcf;">Materials</div>
<svg class="a" style="left:88px;top:922.5px;" width="14" height="12" viewBox="0 0 14 12"><path d="M0.5 1.5 L5 1.5 L6.5 3.5 L13.5 3.5 L13.5 11.5 L0.5 11.5 Z" fill="#c8c8c8"/><rect x="0.5" y="4.5" width="13" height="7" fill="#e2e2e2"/></svg>
<div class="t" style="left:104.4px;top:924.43px;font-size:11.9px;color:#cfcfcf;">Shader</div>
<div class="a" style="left:288px;top:793px;width:1278px;height:18px;background:#3e3e3e;border-bottom:1px solid #262626;box-sizing:border-box;"></div>
<div class="t" style="left:293.7px;top:797.18px;font-size:11.6px;color:#cfcfcf;font-weight:bold;">Assets</div>
<svg class="a" style="left:336px;top:799px;" width="5" height="7" viewBox="0 0 5 7"><path d="M0 0 L5 3.5 L0 7 Z" fill="#a0a0a0"/></svg>
<div class="a" style="left:288px;top:1050px;width:1278px;height:17px;background:#414141;border-top:1px solid #262626;box-sizing:border-box;"></div>
<div class="a" style="left:1495px;top:1058px;width:55px;height:3px;background:#2a2a2a;border-radius:2px;"></div>
<div class="a" style="left:1521px;top:1053px;width:11px;height:11px;background:radial-gradient(circle at 50% 35%,#8a8a8a,#555);border-radius:50%;border:1px solid #222;box-sizing:border-box;"></div>
<svg class="a" style="left:300px;top:818px;" width="540" height="70" viewBox="300 818 540 70"><defs><linearGradient id="fd" x1="0" y1="0" x2="0" y2="1"><stop offset="0" stop-color="#7a8a92"/><stop offset="1" stop-color="#5a6a72"/></linearGradient><radialGradient id="sp" cx="0.35" cy="0.3" r="0.8"><stop offset="0" stop-color="#ffffff"/><stop offset="0.5" stop-color="#c8d4ec"/><stop offset="1" stop-color="#7a8ab0"/></radialGradient><radialGradient id="ap" cx="0.5" cy="0.5" r="0.5"><stop offset="0" stop-color="#fff8e0"/><stop offset="0.35" stop-color="#c89a50"/><stop offset="0.7" stop-color="#6a5020"/><stop offset="0.9" stop-color="#c8a050"/><stop offset="1" stop-color="#8a6830"/></radialGradient></defs><rect x="306" y="823" width="60" height="60" fill="#4b4b4b"/><circle cx="336" cy="852.5" r="26.5" fill="url(#ap)"/><circle cx="336" cy="852.5" r="26.5" fill="none" stroke="#d8b868" stroke-width="1.2"/><path d="M384 834 L384 832 Q384 830.5 386 830.5 L400 830.5 Q402 830.5 403 833 L439 833 Q441 833 441 835 L441 873 Q441 876 438 876 L387 876 Q384 876 384 873 Z" fill="#d8dcdf"/><path d="M384 837 Q384 834.5 387 834.5 L438 834.5 Q441 834.5 441 837 L441 873 Q441 876 438 876 L387 876 Q384 876 384 873 Z" fill="url(#fd)"/><path d="M536 834 L536 832 Q536 830.5 538 830.5 L552 830.5 Q554 830.5 555 833 L591 833 Q593 833 593 835 L593 873 Q593 876 590 876 L539 876 Q536 876 536 873 Z" fill="#d8dcdf"/><path d="M536 837 Q536 834.5 539 834.5 L590 834.5 Q593 834.5 593 837 L593 873 Q593 876 590 876 L539 876 Q536 876 536 873 Z" fill="url(#fd)"/><path d="M612 834 L612 832 Q612 830.5 614 830.5 L628 830.5 Q630 830.5 631 833 L667 833 Q669 833 669 835 L669 873 Q669 876 666 876 L615 876 Q612 876 612 873 Z" fill="#d8dcdf"/><path d="M612 837 Q612 834.5 615 834.5 L666 834.5 Q669 834.5 669 837 L669 873 Q669 876 666 876 L615 876 Q612 876 612 873 Z" fill="url(#fd)"/><g transform="translate(455 820) scale(0.0556)"><path d="M65 585 L520 195 L940 75 L1060 460 L1000 590 L1060 710 L960 1085 L530 985 Z" fill="#141414"/><path d="M270 535 L490 305 L800 230 L630 540 Z M270 640 L630 640 L800 950 L490 870 Z M715 590 L885 285 L975 590 L890 895 Z" fill="#f6f6f6"/></g><rect x="686" y="823" width="60" height="60" fill="#4b4b4b"/><circle cx="715.6" cy="852.4" r="17.2" fill="url(#sp)"/><circle cx="748" cy="852" r="7.5" fill="#3a3a3a" stroke="#9a9a9a" stroke-width="1.3"/><path d="M746 848.5 L751 852 L746 855.5 Z" fill="#ddd"/><rect x="762" y="823" width="60" height="60" fill="#4b4b4b"/><circle cx="791.8" cy="852.4" r="17.2" fill="url(#sp)"/><circle cx="824" cy="852" r="7.5" fill="#3a3a3a" stroke="#9a9a9a" stroke-width="1.3"/><path d="M822 848.5 L827 852 L822 855.5 Z" fill="#ddd"/></svg>
<div class="t" style="left:36px;width:600px;text-align:center;top:889.87px;font-size:10.2px;color:#bdbdbd;letter-spacing:0.2px;">airplane_361</div>
<div class="t" style="left:112px;width:600px;text-align:center;top:889.87px;font-size:10.2px;color:#bdbdbd;letter-spacing:0.2px;">AmplifyShad...</div>
<div class="t" style="left:188px;width:600px;text-align:center;top:889.87px;font-size:10.2px;color:#bdbdbd;letter-spacing:0.2px;">Main</div>
<div class="t" style="left:263px;width:600px;text-align:center;top:889.87px;font-size:10.2px;color:#bdbdbd;letter-spacing:0.2px;">Materials</div>
<div class="t" style="left:339px;width:600px;text-align:center;top:889.87px;font-size:10.2px;color:#bdbdbd;letter-spacing:0.2px;">Shader</div>
<div class="t" style="left:416px;width:600px;text-align:center;top:889.87px;font-size:10.2px;color:#bdbdbd;letter-spacing:0.2px;">sphere_30k</div>
<div class="t" style="left:492px;width:600px;text-align:center;top:889.87px;font-size:10.2px;color:#bdbdbd;letter-spacing:0.2px;">sphere_100k</div>
<svg class="a" style="left:60px;top:1072px;" width="12" height="12" viewBox="0 0 12 12"><circle cx="6" cy="6" r="5.6" fill="#e8e8e8"/><rect x="5" y="2.5" width="2" height="4.5" fill="#333"/><rect x="5" y="8" width="2" height="1.8" fill="#333"/></svg>
</body></html>
